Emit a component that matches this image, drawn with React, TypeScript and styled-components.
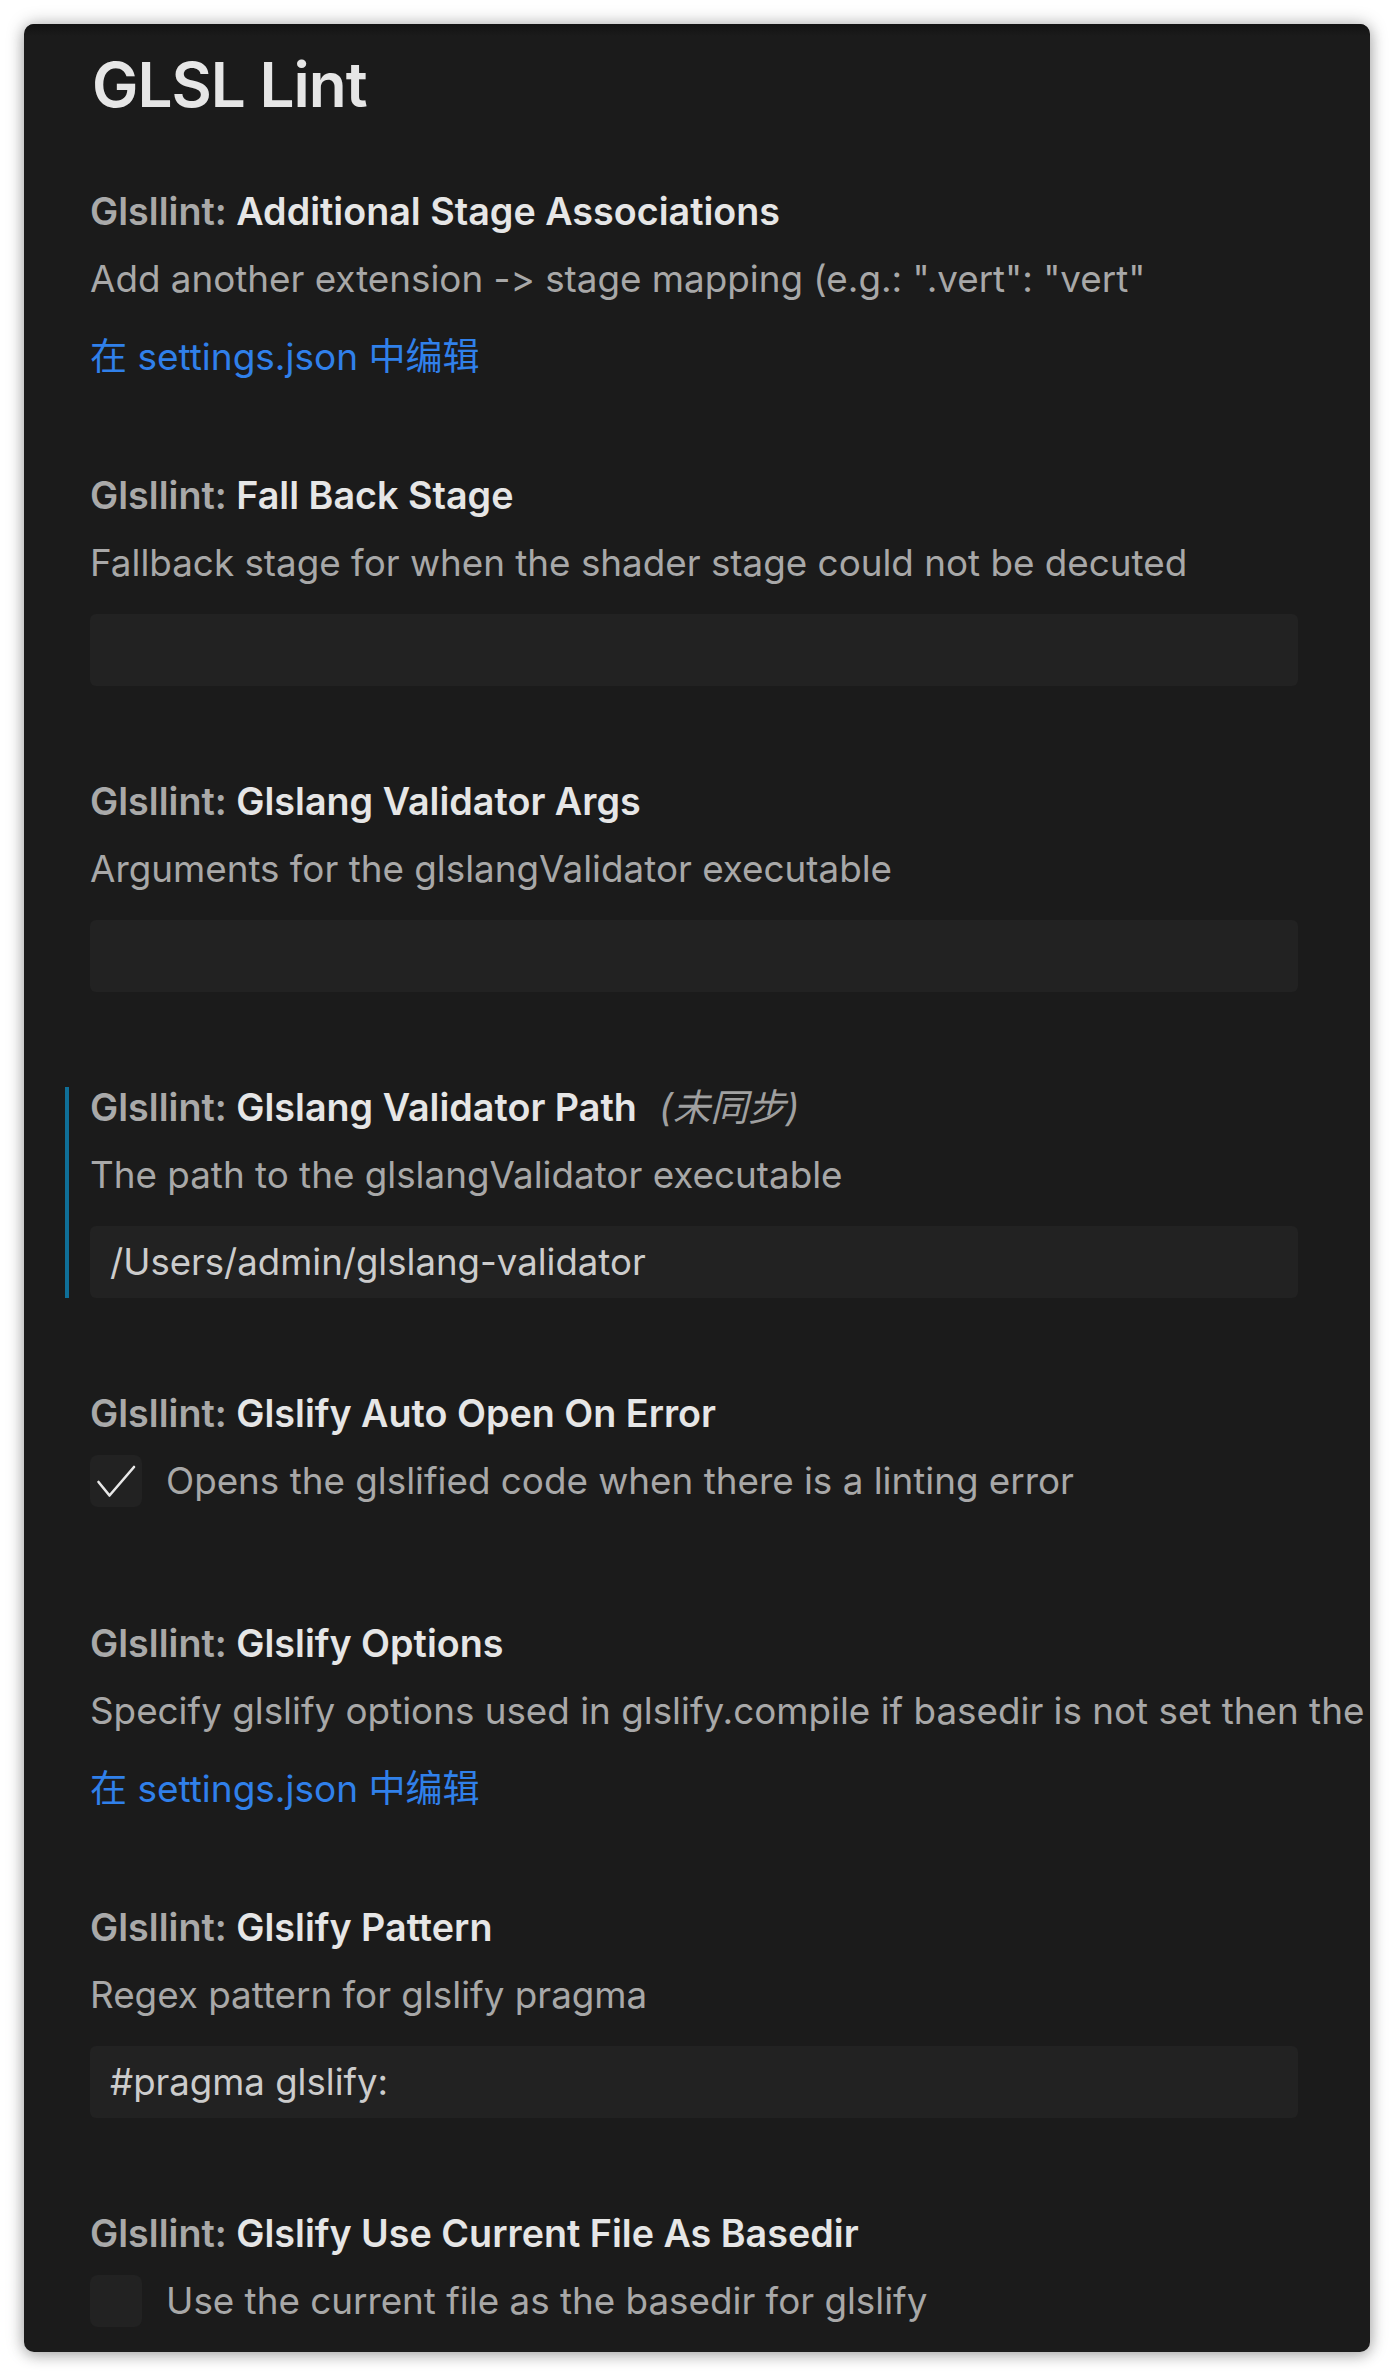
import React from "react";
import styled, { createGlobalStyle } from "styled-components";

const GlobalStyle = createGlobalStyle`
  html, body {
    margin: 0;
    padding: 0;
    background: #ffffff;
  }
  body {
    font-family: Inter, "Noto Sans", "Noto Sans CJK SC", sans-serif;
    font-feature-settings: "calt" 0, "liga" 0;
    font-variant-ligatures: none;
    -webkit-font-smoothing: antialiased;
  }
`;

const Page = styled.div`
  padding: 24px 24px 25px 24px;
`;

const Panel = styled.div`
  position: relative;
  background: #1b1b1b;
  border-radius: 10px;
  overflow: hidden;
  box-shadow: 0 0 18px rgba(0, 0, 0, 0.28), 0 4px 14px rgba(0, 0, 0, 0.18);
  padding: 21px 0 25px 0;
  &::before {
    content: "";
    position: absolute;
    left: 0;
    right: 0;
    top: 0;
    height: 12px;
    background: linear-gradient(#121212, rgba(27, 27, 27, 0));
  }
`;

const Title = styled.h1`
  margin: 0 0 60px 0;
  padding-left: 68px;
  font-size: 62px;
  line-height: 80px;
  font-weight: 600;
  color: #e6e6e6;
  letter-spacing: -1px;
`;

const SettingsList = styled.div`
  display: flex;
  flex-direction: column;
  gap: 86px;
`;

const Item = styled.div<{ $modified?: boolean; $extraBottom?: boolean }>`
  position: relative;
  padding: 0 72px ${(p) => (p.$extraBottom ? "24px" : "0")} 66px;
  &::before {
    content: "";
    display: ${(p) => (p.$modified ? "block" : "none")};
    position: absolute;
    left: 41px;
    top: 6px;
    bottom: 3px;
    width: 4px;
    background: #0f6f98;
  }
`;

const Label = styled.div`
  font-size: 37.7px;
  line-height: 52px;
  font-weight: 600;
  color: #e6e6e6;
  white-space: nowrap;
`;

const Category = styled.span`
  color: #a9a9a9;
`;

const SyncNote = styled.span`
  margin-left: 22px;
  font-style: italic;
  font-weight: 400;
  color: #a0a0a0;
  font-family: Inter, "Noto Sans CJK SC", sans-serif;
`;

const Description = styled.div`
  margin-top: 16px;
  font-size: 36.8px;
  line-height: 52px;
  color: #a8a8a8;
  white-space: nowrap;
`;

const EditLink = styled.a`
  display: block;
  margin-top: 26px;
  font-size: 37px;
  line-height: 52px;
  color: #3080ea;
  text-decoration: none;
  font-family: Inter, "Noto Sans CJK SC", sans-serif;
`;

const TextInput = styled.div`
  margin-top: 25px;
  margin-bottom: 3px;
  height: 72px;
  box-sizing: border-box;
  padding: 0 20px;
  display: flex;
  align-items: center;
  background: #222222;
  border-radius: 6px;
  font-size: 36.6px;
  color: #cccccc;
`;

const CheckRow = styled.div`
  margin-top: 16px;
  display: flex;
  align-items: center;
  gap: 24px;
`;

const CheckBox = styled.div`
  width: 52px;
  height: 52px;
  flex: none;
  border-radius: 8px;
  background: #222222;
  display: flex;
  align-items: center;
  justify-content: center;
`;

const CheckText = styled.div`
  font-size: 36.8px;
  line-height: 52px;
  color: #a8a8a8;
  white-space: nowrap;
`;

type Setting = {
  name: string;
  description: string;
  kind: "link" | "input" | "checkbox";
  value?: string;
  checked?: boolean;
  modified?: boolean;
};

const settings: Setting[] = [
  {
    name: "Additional Stage Associations",
    description: 'Add another extension -> stage mapping (e.g.: ".vert": "vert"',
    kind: "link",
  },
  {
    name: "Fall Back Stage",
    description: "Fallback stage for when the shader stage could not be decuted",
    kind: "input",
    value: "",
  },
  {
    name: "Glslang Validator Args",
    description: "Arguments for the glslangValidator executable",
    kind: "input",
    value: "",
  },
  {
    name: "Glslang Validator Path",
    description: "The path to the glslangValidator executable",
    kind: "input",
    value: "/Users/admin/glslang-validator",
    modified: true,
  },
  {
    name: "Glslify Auto Open On Error",
    description: "Opens the glslified code when there is a linting error",
    kind: "checkbox",
    checked: true,
  },
  {
    name: "Glslify Options",
    description:
      "Specify glslify options used in glslify.compile if basedir is not set then the basedir will be the file's directory",
    kind: "link",
  },
  {
    name: "Glslify Pattern",
    description: "Regex pattern for glslify pragma",
    kind: "input",
    value: "#pragma glslify:",
  },
  {
    name: "Glslify Use Current File As Basedir",
    description: "Use the current file as the basedir for glslify",
    kind: "checkbox",
    checked: false,
  },
];

const CheckMark = () => (
  <svg width="52" height="52" viewBox="0 0 52 52" fill="none">
    <polyline
      points="8.5,27 19.5,40.5 44,12"
      stroke="#e8e8e8"
      strokeWidth="2.6"
      strokeLinecap="round"
      strokeLinejoin="round"
    />
  </svg>
);

const SettingItem = ({ s, isLast }: { s: Setting; isLast: boolean }) => (
  <Item $modified={s.modified} $extraBottom={s.kind === "checkbox" && !isLast}>
    <Label>
      <Category>Glsllint: </Category>
      {s.name}
      {s.modified && <SyncNote>(未同步)</SyncNote>}
    </Label>
    {s.kind === "checkbox" ? (
      <CheckRow>
        <CheckBox>{s.checked && <CheckMark />}</CheckBox>
        <CheckText>{s.description}</CheckText>
      </CheckRow>
    ) : (
      <Description>{s.description}</Description>
    )}
    {s.kind === "link" && <EditLink href="#">在 settings.json 中编辑</EditLink>}
    {s.kind === "input" && <TextInput>{s.value}</TextInput>}
  </Item>
);

export default function App() {
  return (
    <>
      <GlobalStyle />
      <Page>
        <Panel>
          <Title>GLSL Lint</Title>
          <SettingsList>
            {settings.map((s, i) => (
              <SettingItem key={s.name} s={s} isLast={i === settings.length - 1} />
            ))}
          </SettingsList>
        </Panel>
      </Page>
    </>
  );
}
